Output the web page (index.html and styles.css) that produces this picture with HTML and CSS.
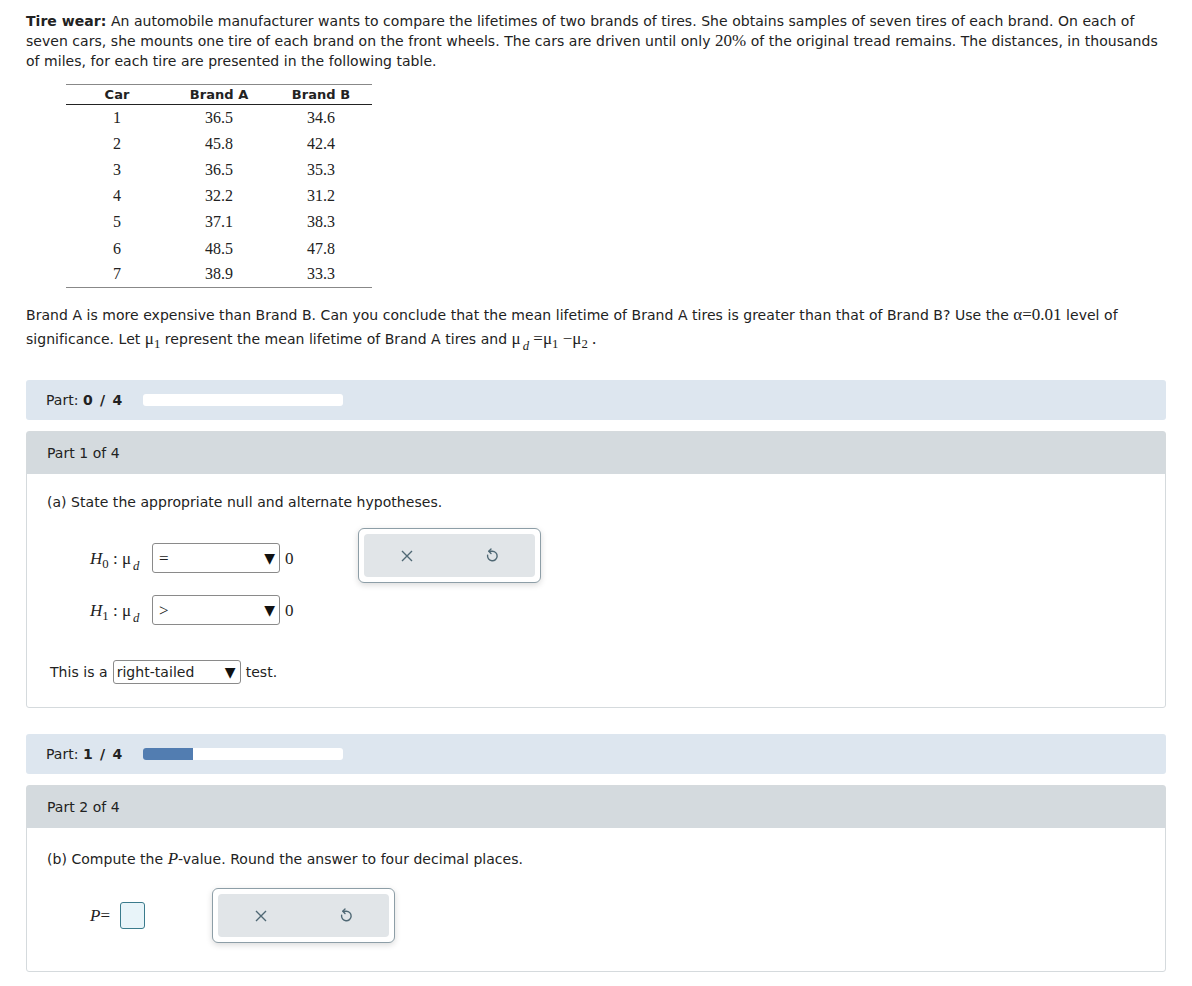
FILE: index.html
```html
<!DOCTYPE html>
<html>
<head>
<meta charset="utf-8">
<link rel="stylesheet" href="styles.css">
</head>
<body>
<div class="page">
  <p class="intro"><b>Tire wear:</b> An automobile manufacturer wants to compare the lifetimes of two brands of tires. She obtains samples of seven tires of each brand. On each of seven cars, she mounts one tire of each brand on the front wheels. The cars are driven until only <span class="m">20%</span> of the original tread remains. The distances, in thousands of miles, for each tire are presented in the following table.</p>

  <table class="data">
    <thead>
      <tr><th>Car</th><th>Brand A</th><th>Brand B</th></tr>
    </thead>
    <tbody>
      <tr><td>1</td><td>36.5</td><td>34.6</td></tr>
      <tr><td>2</td><td>45.8</td><td>42.4</td></tr>
      <tr><td>3</td><td>36.5</td><td>35.3</td></tr>
      <tr><td>4</td><td>32.2</td><td>31.2</td></tr>
      <tr><td>5</td><td>37.1</td><td>38.3</td></tr>
      <tr><td>6</td><td>48.5</td><td>47.8</td></tr>
      <tr><td>7</td><td>38.9</td><td>33.3</td></tr>
    </tbody>
  </table>

  <p class="question">Brand A is more expensive than Brand B. Can you conclude that the mean lifetime of Brand A tires is greater than that of Brand B? Use the <span class="m">α=0.01</span> level of significance. Let <span class="m">μ<sub>1</sub></span> represent the mean lifetime of Brand A tires and <span class="m">μ<sub class="sd"><i>d</i></sub> =μ<sub>1</sub> −μ<sub>2</sub> .</span></p>

  <div class="progress">
    <span>Part: <b>0 / 4</b></span>
    <div class="track"></div>
  </div>

  <div class="card">
    <div class="card-head">Part 1 of 4</div>
    <div class="card-body">
      <p class="prompt">(a) State the appropriate null and alternate hypotheses.</p>
      <div class="hyp-area">
        <div class="hyp-col">
          <div class="hyp-row">
            <span class="m lbl"><i>H</i><sub>0</sub> : μ<sub class="sd"><i>d</i></sub></span>
            <span class="select"><span class="m">=</span><span class="tri">▼</span></span>
            <span class="m zero">0</span>
          </div>
          <div class="hyp-row">
            <span class="m lbl"><i>H</i><sub>1</sub> : μ<sub class="sd"><i>d</i></sub></span>
            <span class="select"><span class="m">&gt;</span><span class="tri">▼</span></span>
            <span class="m zero">0</span>
          </div>
        </div>
        <div class="btns">
          <div class="btns-in">
            <span class="ic"><svg width="16" height="16" viewBox="0 0 16 16"><path d="M3 3 L13 13 M13 3 L3 13" stroke="#4f6874" stroke-width="1.4" fill="none"/></svg></span>
            <span class="ic"><svg width="16" height="16" viewBox="0 0 16 16"><path d="M5 3.2 H8.2 A4.8 4.8 0 1 1 3.6 7.2" stroke="#4f6874" stroke-width="1.4" fill="none" stroke-linecap="round"/><path d="M7 1 L4.8 3.2 L7 5.4" stroke="#4f6874" stroke-width="1.4" fill="none" stroke-linecap="round" stroke-linejoin="round"/></svg></span>
          </div>
        </div>
      </div>
      <div class="tail-row">
        <span>This is a</span>
        <span class="select small"><span>right-tailed</span><span class="tri">▼</span></span>
        <span>test.</span>
      </div>
    </div>
  </div>

  <div class="progress p2">
    <span>Part: <b>1 / 4</b></span>
    <div class="track"><div class="fill"></div></div>
  </div>

  <div class="card c2">
    <div class="card-head">Part 2 of 4</div>
    <div class="card-body">
      <p class="prompt">(b) Compute the <span class="m"><i>P</i></span>-value. Round the answer to four decimal places.</p>
      <div class="p-area">
        <span class="m plbl"><i>P</i>=</span>
        <span class="input"></span>
        <div class="btns">
          <div class="btns-in">
            <span class="ic"><svg width="16" height="16" viewBox="0 0 16 16"><path d="M3 3 L13 13 M13 3 L3 13" stroke="#4f6874" stroke-width="1.4" fill="none"/></svg></span>
            <span class="ic"><svg width="16" height="16" viewBox="0 0 16 16"><path d="M5 3.2 H8.2 A4.8 4.8 0 1 1 3.6 7.2" stroke="#4f6874" stroke-width="1.4" fill="none" stroke-linecap="round"/><path d="M7 1 L4.8 3.2 L7 5.4" stroke="#4f6874" stroke-width="1.4" fill="none" stroke-linecap="round" stroke-linejoin="round"/></svg></span>
          </div>
        </div>
      </div>
    </div>
  </div>
</div>
</body>
</html>
```

FILE: styles.css
```css
* { box-sizing: border-box; }
body {
  margin: 0;
  background: #fff;
  color: #222;
  font-family: "DejaVu Sans", Verdana, sans-serif;
  font-size: 14px;
  letter-spacing: 0.04px;
}
.page {
  padding: 11px 26px 20px 26px;
}
p { margin: 0; }
.intro {
  line-height: 20px;
}
.m {
  font-family: "Liberation Serif", "Times New Roman", serif;
  font-size: 17px;
  line-height: 1;
  letter-spacing: 0;
}
sub {
  font-size: 0.75em;
  vertical-align: -0.3em;
  line-height: 0;
}
sub.sd {
  margin-left: 2px;
  vertical-align: -0.45em;
}
.data {
  margin: 13px 0 0 40px;
  border-collapse: collapse;
  border-top: 1px solid #888;
  border-bottom: 1px solid #888;
}
.data th {
  width: 102px;
  font-size: 13px;
  font-weight: bold;
  height: 20px;
  padding: 0;
  border-bottom: 1px solid #222;
  text-align: center;
}
.data td {
  font-family: "Liberation Serif", "Times New Roman", serif;
  font-size: 16px;
  height: 26.2px;
  padding: 0;
  text-align: center;
}
.question {
  margin-top: 15px;
  line-height: 24px;
}
.progress {
  margin-top: 29px;
  height: 40px;
  background: #dde6ef;
  border-radius: 3px;
  display: flex;
  align-items: center;
  padding-left: 20px;
}
.progress b { font-weight: bold; letter-spacing: 1.2px; }
.track {
  margin-left: 20px;
  width: 200px;
  height: 12px;
  background: #fff;
  border-radius: 3px;
  overflow: hidden;
}
.fill {
  width: 50px;
  height: 12px;
  background: #527db1;
}
.card {
  margin-top: 11px;
  border: 1px solid #d5dadd;
  border-radius: 3px;
  height: 277px;
}
.card-head {
  height: 42px;
  background: #d4dade;
  display: flex;
  align-items: center;
  padding-left: 20px;
}
.card-body {
  padding: 18px 0 0 20px;
}
.prompt {
  line-height: 20px;
}
.hyp-area {
  display: flex;
  align-items: flex-start;
  margin-top: 16px;
}
.hyp-col {
  width: 311px;
  padding: 15px 0 0 43px;
  display: flex;
  flex-direction: column;
  gap: 22px;
}
.hyp-row {
  display: flex;
  align-items: center;
  height: 30px;
}
.lbl {
  width: 62px;
}
.select {
  display: flex;
  align-items: center;
  justify-content: space-between;
  width: 128px;
  height: 30px;
  border: 1px solid #8a8a8a;
  border-radius: 3px;
  padding: 0 4px 0 6px;
  background: #fff;
}
.tri {
  font-family: "DejaVu Sans", sans-serif;
  font-size: 14px;
  color: #111;
}
.zero {
  margin-left: 5px;
}
.btns {
  width: 183px;
  height: 55px;
  border: 1px solid #8d9ea7;
  border-radius: 6px;
  padding: 5px;
  box-shadow: 0 2px 6px rgba(0,0,0,0.15);
  background: #fff;
}
.btns-in {
  height: 100%;
  background: #e1e5e8;
  border-radius: 4px;
  display: flex;
}
.ic {
  flex: 1;
  display: flex;
  align-items: center;
  justify-content: center;
}
.tail-row {
  display: flex;
  align-items: center;
  gap: 5px;
  margin: 35px 0 0 3px;
}
.select.small {
  width: 128px;
  height: 24px;
  padding: 0 4px 0 3px;
}
.progress.p2 {
  margin-top: 26px;
}
.card.c2 {
  height: 187px;
}
.c2 .card-body {
  padding-top: 21px;
}
.p-area {
  display: flex;
  align-items: center;
  margin: 19px 0 0 43px;
}
.plbl {
  width: 30px;
}
.input {
  width: 25px;
  height: 27px;
  border: 1px solid #3a7b8c;
  border-radius: 3px;
  background: #e8f4f9;
}
.p-area .btns {
  margin-left: 67px;
}
```
